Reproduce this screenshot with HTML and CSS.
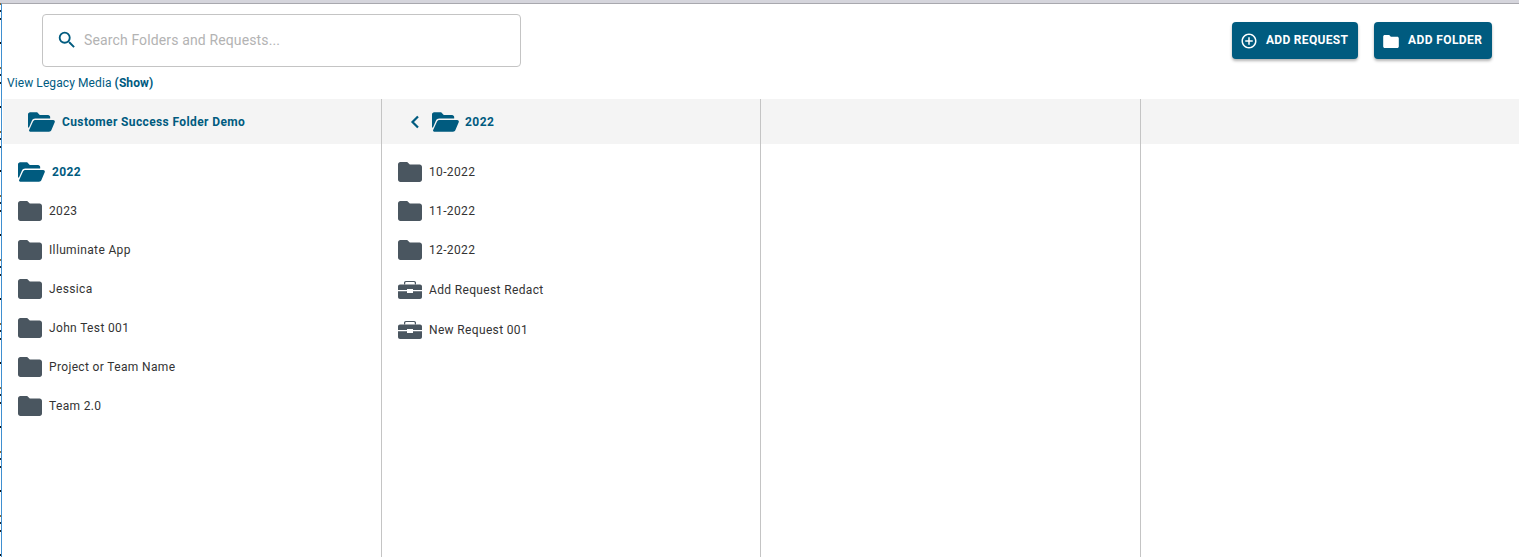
FILE: index.html
```html
<!DOCTYPE html>
<html lang="en">
<head>
<meta charset="utf-8">
<title>Folders and Requests</title>
<link rel="stylesheet" href="styles.css">
</head>
<body>
<svg class="defs" width="0" height="0" aria-hidden="true">
  <symbol id="closed" viewBox="0 0 24 20"><path d="M2.400 0h6.800l2.600 2.600h9.800c1.300 0 2.400 1 2.400 2.400v12.600c0 1.300-1.100 2.400-2.400 2.400H2.400C1.100 20 0 18.900 0 17.600V2.400C0 1.100 1.100 0 2.400 0z"/></symbol>
  <symbol id="open" viewBox="0 0 28 20"><path d="M0 2.200C0 1 1 0 2.200 0h7.300l2.700 2.700h8.600c1.200 0 2.200 1 2.200 2.200v1.400H7.500c-1.600 0-2.900.9-3.500 2.300L1 15.800H0z"/><path d="M7.700 8h18.500c1.200 0 2 1.200 1.500 2.300l-3.400 8c-.4 1-1.400 1.700-2.500 1.700H2.300c-.9 0-1.500-.9-1.100-1.700l3.900-8.500C5.600 8.700 6.600 8 7.700 8z"/></symbol>
  <symbol id="case" viewBox="0 0 24 18"><path d="M6 3.500V1.800C6 .8 6.800 0 7.800 0h8.400c1 0 1.800.8 1.800 1.800v1.700h-1.200V2c0-.5-.4-.9-.9-.9H8.100c-.5 0-.9.400-.9.900v1.500z"/><path d="M2 3.500h20c1.100 0 2 .9 2 2V9h-9V8H9v1H0V5.500c0-1.100.9-2 2-2z"/><path d="M0 10.200h9v1.800h6v-1.800h9V16c0 1.100-.9 2-2 2H2c-1.100 0-2-.9-2-2z"/></symbol>
</svg>
<div class="app">
  <header class="toolbar">
    <div class="toolbar-main">
      <label class="search">
        <svg class="search-icon" viewBox="0 0 24 24"><path d="M15.500 14h-.79l-.28-.27A6.470 6.470 0 0 0 16 9.500 6.500 6.500 0 1 0 9.500 16c1.610 0 3.090-.59 4.230-1.570l.27.280v.79l5 4.990L20.490 19l-4.990-5zm-6 0C7.010 14 5 11.990 5 9.500S7.010 5 9.500 5 14 7.010 14 9.500 11.990 14 9.500 14z"/></svg>
        <span class="placeholder">Search Folders and Requests...</span>
      </label>
      <div class="actions">
        <button class="btn btn-request" type="button">
          <svg class="btn-icon-plus" viewBox="0 0 24 24"><path d="M13 7h-2v4H7v2h4v4h2v-4h4v-2h-4V7zm-1-5C6.490 2 2 6.490 2 12s4.490 10 10 10 10-4.490 10-10S17.510 2 12 2zm0 18c-4.410 0-8-3.590-8-8s3.590-8 8-8 8 3.590 8 8-3.590 8-8 8z"/></svg>
          ADD REQUEST
        </button>
        <button class="btn btn-folder" type="button">
          <svg class="btn-icon-folder"><use href="#closed"/></svg>
          ADD FOLDER
        </button>
      </div>
    </div>
    <div class="legacy">View Legacy Media <b>(Show)</b></div>
  </header>
  <main class="columns">
    <section class="column">
      <div class="col-head col-head-first">
        <svg class="i-open-lg"><use href="#open"/></svg>
        <span class="head-title">Customer Success Folder Demo</span>
      </div>
      <ul class="list">
        <li class="row active"><svg class="i-open"><use href="#open"/></svg><span>2022</span></li>
        <li class="row"><svg class="i-folder"><use href="#closed"/></svg><span>2023</span></li>
        <li class="row"><svg class="i-folder"><use href="#closed"/></svg><span>Illuminate App</span></li>
        <li class="row"><svg class="i-folder"><use href="#closed"/></svg><span>Jessica</span></li>
        <li class="row"><svg class="i-folder"><use href="#closed"/></svg><span>John Test 001</span></li>
        <li class="row"><svg class="i-folder"><use href="#closed"/></svg><span>Project or Team Name</span></li>
        <li class="row"><svg class="i-folder"><use href="#closed"/></svg><span>Team 2.0</span></li>
      </ul>
    </section>
    <section class="column">
      <div class="col-head col-head-sub">
        <svg class="chevron" viewBox="0 0 10 14"><path d="M8 1.500 2.500 7 8 12.500" fill="none" stroke-width="2.200"/></svg>
        <svg class="i-open-lg"><use href="#open"/></svg>
        <span class="head-title">2022</span>
      </div>
      <ul class="list">
        <li class="row"><svg class="i-folder"><use href="#closed"/></svg><span>10-2022</span></li>
        <li class="row"><svg class="i-folder"><use href="#closed"/></svg><span>11-2022</span></li>
        <li class="row"><svg class="i-folder"><use href="#closed"/></svg><span>12-2022</span></li>
        <li class="row row-request"><svg class="i-case"><use href="#case"/></svg><span>Add Request Redact</span></li>
        <li class="row row-request"><svg class="i-case"><use href="#case"/></svg><span>New Request 001</span></li>
      </ul>
    </section>
    <section class="column"><div class="col-head"></div></section>
    <section class="column"><div class="col-head"></div></section>
  </main>
</div>
</body>
</html>
```

FILE: styles.css
```css
* { box-sizing: border-box; }
html, body { margin: 0; height: 100%; overflow: hidden; }
body {
  font-family: Roboto, "Liberation Sans", sans-serif;
  color: #333;
  border-top: 3px solid #d5d5dc;
  background-color: #fff;
  background-image: linear-gradient(to bottom,
    #8a6a3a 0 2px, #fff 2px 7px,
    #1c2a38 7px 9px, #fff 9px 15px,
    #222 15px 17px, #fff 17px 39px,
    #111 39px 41px, #fff 41px 64px);
  background-size: 1px 64px;
  background-repeat: repeat-y;
  background-position: 0 3px;
}
.defs { position: absolute; }
.app {
  height: 554px;
  margin-left: 1px;
  padding-left: 1px;
  display: flex;
  flex-direction: column;
  background: #fff;
  border-top: 1px solid #a8a8ae;
  border-left: 1px solid #3f8fd0;
}
.toolbar { height: 95px; flex: none; }
.toolbar-main {
  display: flex;
  justify-content: space-between;
  padding: 10px 27px 0 39px;
}
.search {
  width: 479px;
  height: 53px;
  border: 1px solid #c4c4c4;
  border-radius: 4px;
  display: flex;
  align-items: center;
  padding: 0 0 2px 13px;
  gap: 6px;
}
.search-icon { width: 22px; height: 22px; fill: #005b7f; }
.placeholder { font-size: 14px; letter-spacing: .13px; color: #b3b3b3; }
.actions { display: flex; gap: 16px; padding-top: 8px; }
.btn {
  height: 37px;
  border: 0;
  border-radius: 4px;
  background: #005b7f;
  color: #fff;
  font: 700 12px Roboto, sans-serif;
  letter-spacing: .3px;
  display: flex;
  align-items: center;
  padding-bottom: 2px;
  box-shadow: 0 2px 3px rgba(0,0,0,.3);
}
.btn-request { width: 126px; padding-left: 8px; gap: 8px; }
.btn-folder { width: 118px; padding-left: 9px; gap: 9px; letter-spacing: .4px; }
.btn-icon-plus { width: 18px; height: 18px; fill: #fff; position: relative; top: 1px; }
.btn-icon-folder { width: 16px; height: 13px; fill: #fff; position: relative; top: 1px; }
.legacy {
  font-size: 12px;
  line-height: 16px;
  letter-spacing: .09px;
  color: #005b7f;
  padding: 8px 0 0 4px;
}
.columns { flex: 1; display: flex; min-height: 0; }
.column { width: 379px; flex: none; border-right: 1px solid #c4c4c4; }
.column:nth-child(3) { width: 380px; }
.column:last-child { flex: 1; border-right: 0; }
.col-head {
  height: 45px;
  background: #f4f4f4;
  display: flex;
  align-items: center;
  color: #005b7f;
}
.col-head-first { padding-left: 25px; gap: 7px; }
.col-head-sub { padding-left: 28px; }
.head-title { font-size: 12px; font-weight: 700; letter-spacing: .38px; }
.i-open-lg { width: 27px; height: 20px; fill: #005b7f; }
.chevron { width: 10px; height: 14px; stroke: #005b7f; margin-right: 12px; }
.col-head-sub .head-title { margin-left: 6px; letter-spacing: .45px; }
.list { list-style: none; margin: 0; padding: 9px 0 0 15px; }
.column + .column .list { padding-left: 16px; }
.row {
  height: 38.860px;
  display: flex;
  align-items: center;
  font-size: 12px;
  letter-spacing: .35px;
  color: #333;
}
.row-request { height: 40px; }
.row svg { flex: none; }
.i-folder { width: 24px; height: 20px; fill: #4a5660; margin-right: 7px; }
.i-case { width: 24px; height: 18px; fill: #4a5660; margin-right: 7px; }
.i-open { width: 27px; height: 20px; fill: #005b7f; margin-right: 7px; }
.row.active { color: #005b7f; font-weight: 700; letter-spacing: .4px; }
```
